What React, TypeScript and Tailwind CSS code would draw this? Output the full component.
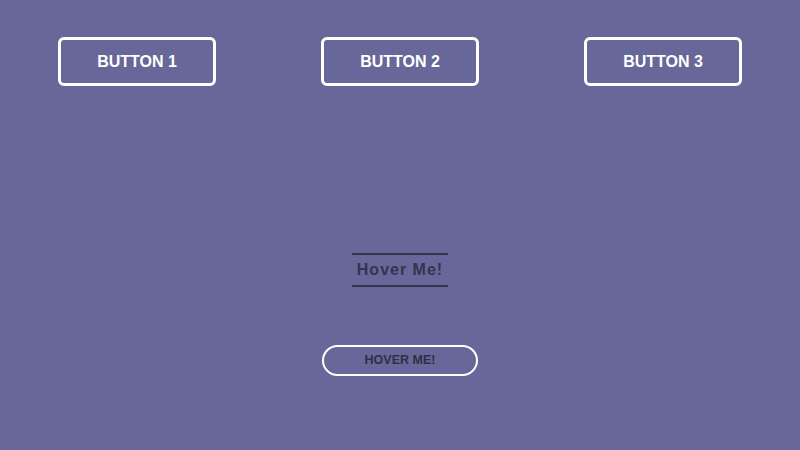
export default function App() {
  const buttons = ["BUTTON 1", "BUTTON 2", "BUTTON 3"];

  return (
    <div
      className="w-[800px] h-[450px] bg-[#676799] flex flex-col items-center"
      style={{ fontFamily: '"Liberation Sans", Arial, sans-serif' }}
    >
      {/* top row of outlined buttons */}
      <div className="w-full flex justify-between px-[58px] pt-[37px]">
        {buttons.map((label) => (
          <button
            key={label}
            className="w-[158px] h-[49px] border-[3px] border-white rounded-[6px] text-white font-bold text-base"
          >
            {label}
          </button>
        ))}
      </div>

      {/* underline / overline link */}
      <div className="mt-[167px] w-[96px] h-[34px] border-y-2 border-[#34344f] flex items-center justify-center">
        <span className="text-[#34344f] font-bold text-base tracking-[1px]">Hover Me!</span>
      </div>

      {/* pill button */}
      <button className="mt-[58px] w-[156px] h-[31px] border-2 border-white rounded-full text-[#2f2f45] font-bold text-[12.5px]">
        HOVER ME!
      </button>
    </div>
  );
}
